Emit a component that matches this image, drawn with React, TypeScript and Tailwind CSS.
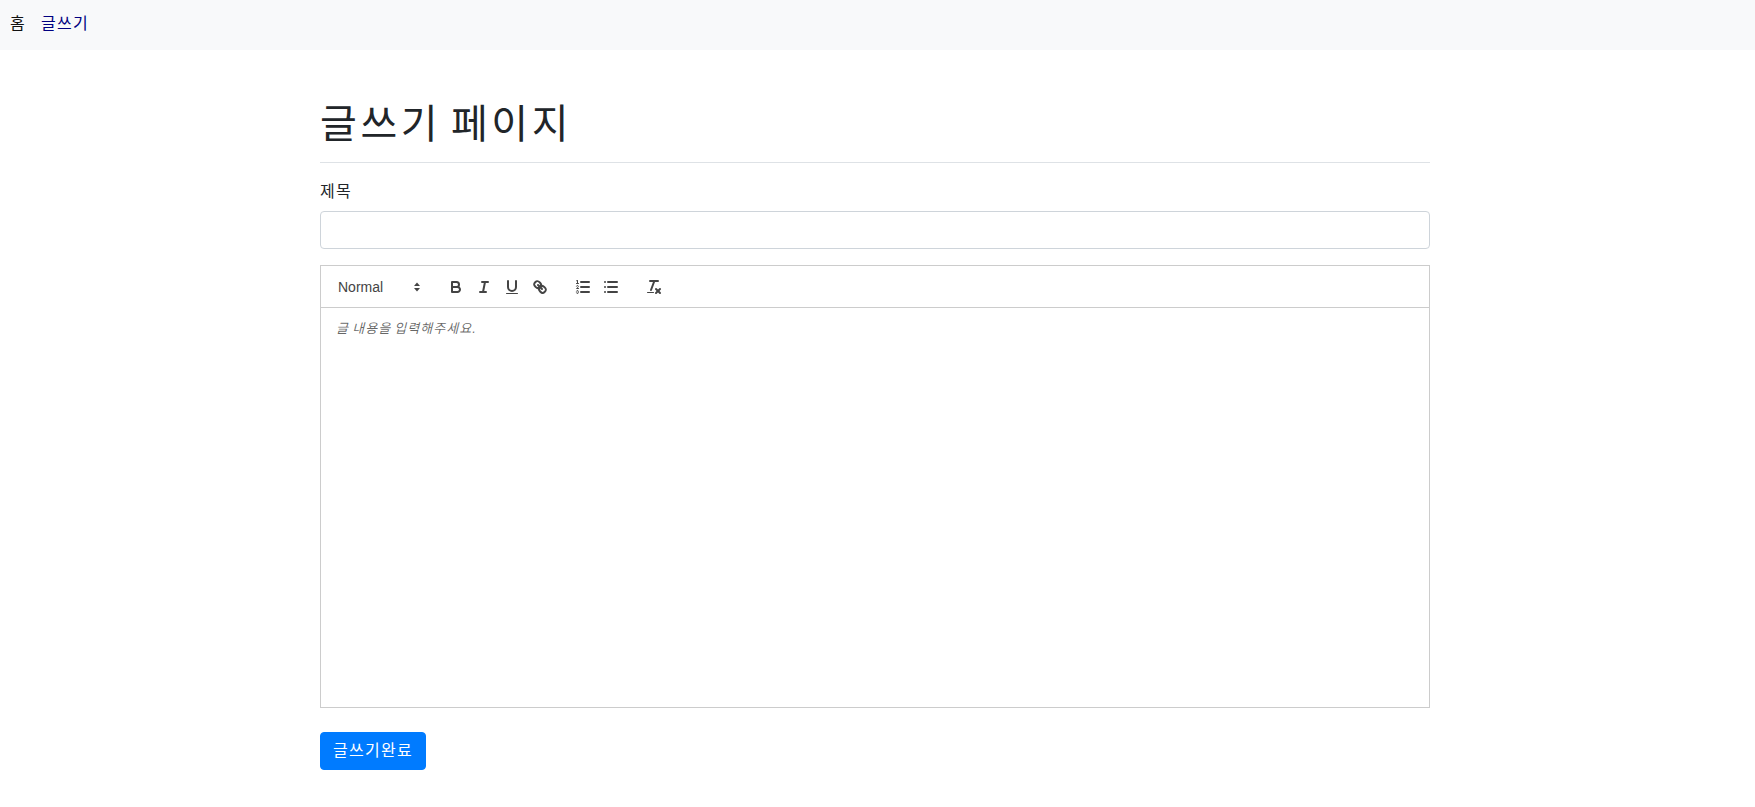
import React from 'react';

const fontStack = "[font-family:'Liberation_Sans','Noto_Sans_CJK_KR',sans-serif]";

// Quill snow 툴바 아이콘
function Icon({ children }: { children: React.ReactNode }) {
  return (
    <svg viewBox="0 0 18 18" className="w-[18px] h-[18px] fill-none stroke-[#444] stroke-2 [stroke-linecap:round] [stroke-linejoin:round]">
      {children}
    </svg>
  );
}

function ToolButton({ children }: { children: React.ReactNode }) {
  return (
    <button type="button" className="w-[28px] h-[24px] px-[5px] py-[3px]">
      <Icon>{children}</Icon>
    </button>
  );
}

function Toolbar() {
  return (
    <div className="flex items-start border border-[#ccc] pt-[9px] px-2 pb-2">
      <div className="relative w-[98px] h-[24px] mr-[15px] flex items-center pl-[9px] text-[14px] font-medium text-[#444]">
        Normal
        <span className="absolute right-[1px] top-[3px]">
          <svg viewBox="0 0 18 18" className="w-[18px] h-[18px] fill-[#444]">
            <polygon points="6 8 9 4.5 12 8" />
            <polygon points="6 10 9 13.5 12 10" />
          </svg>
        </span>
      </div>

      <div className="flex mr-[15px]">
        <ToolButton>
          <path d="M5,4H9.5A2.5,2.5,0,0,1,12,6.5v0A2.5,2.5,0,0,1,9.5,9H5A0,0,0,0,1,5,9V4A0,0,0,0,1,5,4Z" />
          <path d="M5,9h5.5A2.5,2.5,0,0,1,13,11.5v0A2.5,2.5,0,0,1,10.5,14H5a0,0,0,0,1,0,0V9A0,0,0,0,1,5,9Z" />
        </ToolButton>
        <ToolButton>
          <line x1="7" x2="13" y1="4" y2="4" />
          <line x1="5" x2="11" y1="14" y2="14" />
          <line x1="8" x2="10" y1="14" y2="4" />
        </ToolButton>
        <ToolButton>
          <path d="M5,3V9a4.012,4.012,0,0,0,4,4H9a4.012,4.012,0,0,0,4-4V3" />
          <rect height="1" rx=".5" ry=".5" width="12" x="3" y="15" className="fill-[#444] stroke-none" />
        </ToolButton>
        <ToolButton>
          <line x1="7" x2="11" y1="7" y2="11" />
          <path d="M8.9,4.577a3.476,3.476,0,0,1,.36,4.679A3.476,3.476,0,0,1,4.577,8.9C3.185,7.5,2.035,6.4,4.217,4.217S7.5,3.185,8.9,4.577Z" />
          <path d="M13.423,9.1a3.476,3.476,0,0,0-4.679-.36,3.476,3.476,0,0,0,.36,4.679c1.392,1.392,2.5,2.542,4.679.36S14.815,10.5,13.423,9.1Z" />
        </ToolButton>
      </div>

      <div className="flex mr-[15px]">
        <ToolButton>
          <line x1="7" x2="15" y1="4" y2="4" />
          <line x1="7" x2="15" y1="9" y2="9" />
          <line x1="7" x2="15" y1="14" y2="14" />
          <line x1="2.5" x2="4.5" y1="5.5" y2="5.5" className="stroke-1" />
          <path className="fill-[#444] stroke-none" d="M3.5,6A0.5,0.5,0,0,1,3,5.5V3.085l-0.276.138A0.5,0.5,0,0,1,2.053,3c-0.124-.247-0.023-0.324.224-0.447l1-.5A0.5,0.5,0,0,1,4,2.5v3A0.5,0.5,0,0,1,3.5,6Z" />
          <path className="stroke-1" d="M4.5,10.5h-2c0-.234,1.85-1.076,1.85-2.234A0.959,0.959,0,0,0,2.5,8.156" />
          <path className="stroke-1" d="M2.5,14.846a0.959,0.959,0,0,0,1.85-.109A0.7,0.7,0,0,0,3.75,14a0.688,0.688,0,0,0,.6-0.736,0.959,0.959,0,0,0-1.85-.109" />
        </ToolButton>
        <ToolButton>
          <line x1="6" x2="15" y1="4" y2="4" />
          <line x1="6" x2="15" y1="9" y2="9" />
          <line x1="6" x2="15" y1="14" y2="14" />
          <line x1="3" x2="3" y1="4" y2="4" />
          <line x1="3" x2="3" y1="9" y2="9" />
          <line x1="3" x2="3" y1="14" y2="14" />
        </ToolButton>
      </div>

      <ToolButton>
        <line x1="5" x2="13" y1="3" y2="3" />
        <line x1="6" x2="9.35" y1="12" y2="3" />
        <line x1="11" x2="15" y1="11" y2="15" />
        <line x1="15" x2="11" y1="11" y2="15" />
        <rect height="1" rx=".5" ry=".5" width="7" x="2" y="14" className="fill-[#444] stroke-none" />
      </ToolButton>
    </div>
  );
}

export default function App() {
  return (
    <div className={`min-h-[807px] bg-white text-[#212529] text-base ${fontStack}`}>
      {/* 상단 메뉴 */}
      <nav className="h-[50px] bg-[#f8f9fa] flex items-center pl-[10px] pb-[3px] gap-[15px] tracking-[0.08em]">
        <a className="text-[#111]">홈</a>
        <a className="text-[#000080]">글쓰기</a>
      </nav>

      <div className="pr-[5px]">
        <div className="w-[1110px] mx-auto pt-[50px]">
          <h1 className="text-[40px] leading-[48px] font-normal tracking-[0.09em] [word-spacing:-5px] text-[#212529] pb-[14px] border-b border-[#dee2e6] mb-[17px]">
            글쓰기 페이지
          </h1>

          <label className="block mb-[7px] leading-6 tracking-[0.08em]">제목</label>
          <input
            type="text"
            className="block w-full h-[38px] bg-white border border-[#ced4da] rounded px-3 py-1.5 mb-4"
          />

          <Toolbar />
          <div className="h-[400px] border border-t-0 border-[#ccc] px-[15px] pt-[11px] pb-3">
            <p className="text-[13px] leading-[19.5px] italic text-black/60 tracking-[0.08em] [word-spacing:-1.5px]">
              글 내용을 입력해주세요.
            </p>
          </div>

          <button
            type="button"
            className="block mt-6 h-[38px] px-3 bg-[#007bff] border border-[#007bff] rounded text-white tracking-[0.08em]"
          >
            글쓰기완료
          </button>
        </div>
      </div>
    </div>
  );
}
